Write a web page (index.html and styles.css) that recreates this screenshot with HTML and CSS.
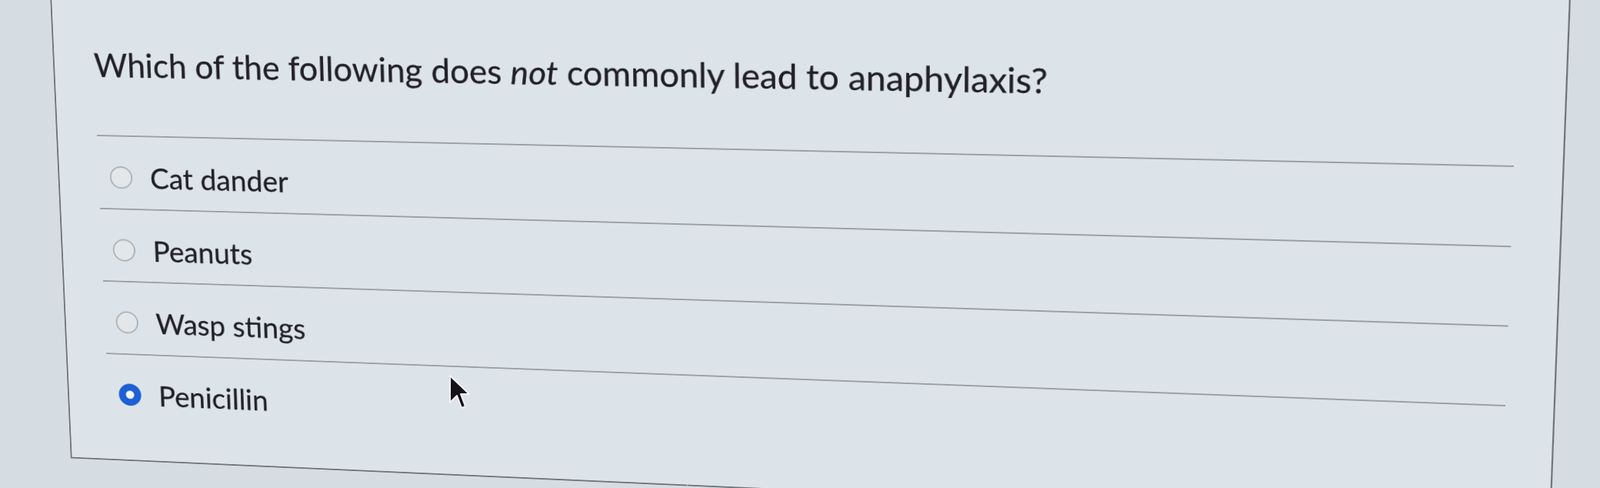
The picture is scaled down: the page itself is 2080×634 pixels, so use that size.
FILE: index.html
```html
<!DOCTYPE html>
<html lang="en">
<head>
    <meta charset="UTF-8">
    <meta name="viewport" content="width=device-width, initial-scale=1.0">
    <title>Quiz Question</title>
    <link rel="stylesheet" href="styles.css">
</head>
<body>
    <div class="screen">
        <div class="card">
            <p class="question">Which of the following does <em>not</em> commonly lead to anaphylaxis?</p>
            <ul class="answers">
                <li class="answer"><span class="radio"></span><span class="label">Cat dander</span></li>
                <li class="answer"><span class="radio"></span><span class="label">Peanuts</span></li>
                <li class="answer"><span class="radio"></span><span class="label">Wasp stings</span></li>
                <li class="answer selected"><span class="radio"></span><span class="label">Penicillin</span></li>
            </ul>
        </div>
    </div>

    <svg class="cursor" width="30" height="48" viewBox="0 0 30 48">
        <path d="M2 2 L2 37 L11 28 L17 44 L22 42 L16 26 L27 26 Z" fill="#141218" stroke="#f2f4f6" stroke-width="2" stroke-linejoin="round"/>
    </svg>
</body>
</html>
```

FILE: styles.css
```css
body {
    margin: 0;
    background: #d6dde2;
    font-family: "Lato", "Open Sans", sans-serif;
    color: #221f29;
    overflow: hidden;
    height: 634px;
}
.screen {
    width: 2080px;
    height: 720px;
    padding-top: 1px;
    box-sizing: border-box;
    transform-origin: 0 0;
    /* photo was taken at an angle */
    transform: matrix3d(0.907213, 0.010954, 0, -0.0000504798, 0.043529, 0.922166, 0, 0.0000384904, 0, 0, 1, 0, 4.031, 12.319, 0, 0.999586);
}
.card {
    box-sizing: border-box;
    width: 1947px;
    margin: -120px 0 0 68px;
    padding: 168px 57px 51px 56px;
    background: #dde4e9;
    border: 2px solid #717478;
    border-top: none;
}
.question {
    margin: 0 0 71.5px;
    font-size: 45.5px;
    line-height: 1.2;
    -webkit-text-stroke: 0.3px #221f29;
}
.question em {
    font-style: italic;
}
.answers {
    list-style: none;
    margin: 0;
    padding: 0;
}
.answer {
    display: flex;
    align-items: center;
    gap: 25px;
    padding: 31px 0 17.7px 16px;
    border-top: 2.5px solid #9a9fa5;
    font-size: 40px;
    line-height: 54px;
    -webkit-text-stroke: 0.3px #221f29;
}
.answer + .answer {
    margin-top: -0.5px;
}
.radio {
    width: 32px;
    height: 32px;
    box-sizing: border-box;
    border: 2px solid #adb0b4;
    border-radius: 50%;
    background: #e3e7ea;
    flex-shrink: 0;
}
.selected .radio {
    border: 10px solid #1d5fd4;
    background: #f4f6f8;
}
.cursor {
    position: absolute;
    left: 583px;
    top: 486px;
}
```
